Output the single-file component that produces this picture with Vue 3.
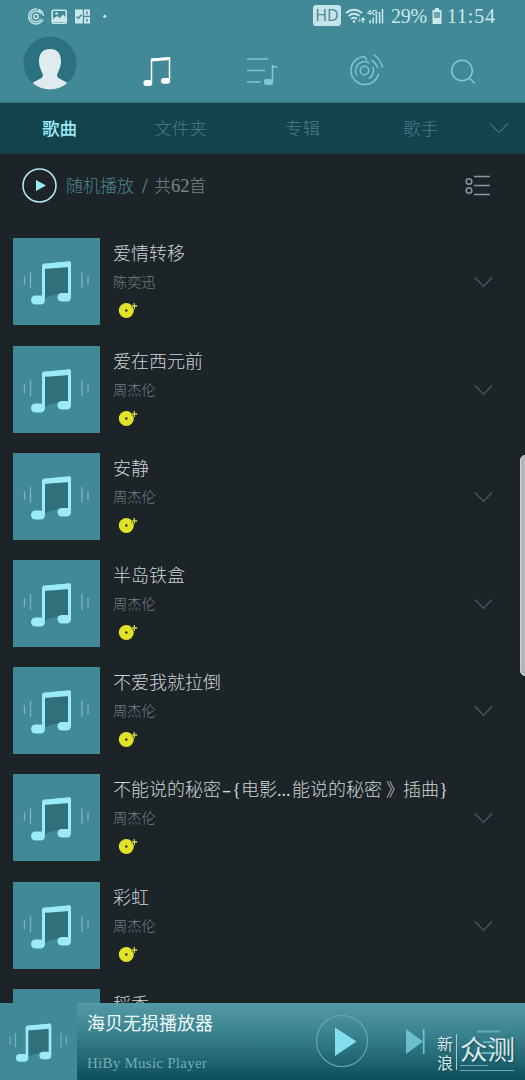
<script setup>
const songs = [
  { parts: [{ t: '爱情转移' }], artist: '陈奕迅' },
  { parts: [{ t: '爱在西元前' }], artist: '周杰伦' },
  { parts: [{ t: '安静' }], artist: '周杰伦' },
  { parts: [{ t: '半岛铁盒' }], artist: '周杰伦' },
  { parts: [{ t: '不爱我就拉倒' }], artist: '周杰伦' },
  {
    parts: [
      { t: '不能说的秘密' },
      { t: '-', c: 'dash' },
      { t: '{', c: 'brace' },
      { t: '电影' },
      { t: '...', c: 'dots' },
      { t: '能说的秘密' },
      { t: '》', c: 'quote' },
      { t: '插曲' },
      { t: '}', c: 'brace' },
    ],
    artist: '周杰伦',
  },
  { parts: [{ t: '彩虹' }], artist: '周杰伦' },
  { parts: [{ t: '稻香' }], artist: '' },
]
</script>

<template>
  <div class="app">
    <svg class="defs" width="0" height="0">
      <defs>
        <symbol id="cover" viewBox="0 0 87 87">
          <path d="M31 29 57 27V57Q45 54 31 61Z" fill="#316f7a" />
          <path d="M30.500 61V27.500L56.500 25V58" fill="none" stroke="#9beaf8" stroke-width="3" stroke-linejoin="round" />
          <path d="M30 25.800 57 23.300V29L30 31Z" fill="#9beaf8" />
          <rect x="18" y="57.500" width="14" height="9" rx="4.500" fill="#9beaf8" />
          <rect x="44.500" y="55" width="13.500" height="8.500" rx="4.200" fill="#9beaf8" />
          <path d="M11.500 38V47M17.500 34V50M69 34V50M75 38V47" stroke="#75b5bf" stroke-width="1.300" />
        </symbol>
      </defs>
    </svg>

    <header class="header">
      <div class="status">
        <svg class="notices" width="90" height="20" viewBox="0 0 90 20" fill="none" stroke="#c9e8ec">
          <circle cx="11" cy="10.500" r="2.200" stroke-width="1.500" />
          <path d="M16 8A5.400 5.400 0 1 0 16 13M12 3A7.500 7.500 0 1 0 18 13.500M13 3.500Q18 5 18.500 10" stroke-width="1.400" />
          <rect x="27.200" y="4.200" width="14" height="13" rx="1" stroke-width="1.600" />
          <path d="M28 16V13L32 10 35 12 38 8.500 41 12V16Z" fill="#c9e8ec" stroke="none" />
          <circle cx="31.500" cy="7.500" r="1.300" fill="#c9e8ec" stroke="none" />
          <path d="M50 3.500h7.800v14h-7.800zM59 3.500h6v6.200h-6zM59 11h6v6.500h-6z" fill="#c9e8ec" stroke="none" />
          <path d="M51.500 10.500 53.500 12.500 56.500 8.500M62 5V8.500M62 12.500V16" stroke="#428997" stroke-width="1.300" />
          <circle cx="79.800" cy="10.200" r="1.500" fill="#c9e8ec" stroke="none" />
        </svg>
        <span class="hd">HD</span>
        <svg class="signal" width="42" height="20" viewBox="0 0 42 20" fill="none" stroke="#c9e8ec">
          <path d="M2 7Q10 .5 18 7M4.500 10Q10 5.500 15.500 10M7 13Q10 10.500 13 13" stroke-width="1.700" />
          <circle cx="10" cy="15.500" r="1.300" fill="#c9e8ec" stroke="none" />
          <path d="M15.500 16V12M14 14l1.500 2 1.500-2" stroke="#8fc0c8" stroke-width="1" />
          <path d="M19 17V12M17.200 14.200l1.800-2.200 1.800 2.200" stroke-width="1.300" />
          <path d="M26 17.500V14M29.200 17.500V11.500M32.400 17.500V9M35.600 17.500V6M38.500 17.500V3" stroke-width="1.500" />
          <text x="23" y="8.500" class="net">4G</text>
        </svg>
        <span class="pct">29%</span>
        <svg class="battery" width="12" height="18" viewBox="0 0 12 18">
          <path d="M4 1h4v2h2.500v14h-9V3H4Z" fill="#c9e8ec" />
          <path d="M3 5h6v6H3Z" fill="#6fa7b1" />
        </svg>
        <span class="clock">11:54</span>
      </div>

      <nav class="nav">
        <svg class="avatar" width="54" height="54" viewBox="0 0 54 54">
          <defs>
            <clipPath id="face"><circle cx="27" cy="27" r="26.500" /></clipPath>
          </defs>
          <circle cx="27" cy="27" r="26.500" fill="#2c717f" />
          <g clip-path="url(#face)" fill="#dfebee">
            <path d="M27 13C34 13 38.200 17.500 38 25.500 37.800 32.500 34.500 36 34 39.500 34.500 43 41 44 46 48V54H8V48C13 44 19.500 43 20 39.500 19.500 36 16.200 32.500 16 25.500 15.800 17.500 20 13 27 13Z" />
          </g>
        </svg>
        <svg class="n-music" width="30" height="32" viewBox="0 0 30 32">
          <path d="M9.500 26V3.500L27.500 2V23" fill="none" stroke="#fff" stroke-width="1.500" />
          <path d="M9 2.500 28 1V4L9 5.500Z" fill="#fff" />
          <rect x="1.500" y="24" width="8.700" height="6" rx="2.800" fill="#fff" />
          <rect x="19" y="22" width="9.200" height="5.800" rx="2.800" fill="#fff" />
        </svg>
        <svg class="n-list" width="34" height="30" viewBox="0 0 34 30" fill="none" stroke="#7fc6d3" stroke-width="1.600" stroke-linecap="round">
          <path d="M2.500 3H22.500M2.500 14.500H19.500M2.500 26H15M27.500 26V10Q29.500 11 32 11" />
          <rect x="19" y="23" width="9" height="6" rx="2.500" fill="#7fc6d3" stroke="none" />
        </svg>
        <svg class="n-disc" width="36" height="36" viewBox="0 0 36 36" fill="none" stroke="#7fc6d3" stroke-width="1.500" stroke-linecap="round">
          <circle cx="16.500" cy="19.500" r="4.200" />
          <path d="M8.700 24A9 9 0 0 1 21 11.800M25 16.500A9 9 0 0 1 21 27.300M18.500 8.500Q17.500 5.200 14.500 5.700A14 14 0 1 0 30.500 23M24 9.500Q28 12 29.500 16.500M26 4Q32.500 8.500 34.500 16" />
        </svg>
        <svg class="n-search" width="28" height="28" viewBox="0 0 28 28" fill="none" stroke="#7fc6d3" stroke-width="1.600" stroke-linecap="round">
          <circle cx="13" cy="13.500" r="10.300" />
          <path d="M20.500 21 25.500 26" />
        </svg>
      </nav>
    </header>

    <div class="tabs">
      <span class="tab on">歌曲</span>
      <span class="tab">文件夹</span>
      <span class="tab">专辑</span>
      <span class="tab">歌手</span>
      <svg class="more" width="20" height="12" viewBox="0 0 20 12"><path d="M1 1.500 10 10.500 19 1.500" fill="none" stroke="#347581" stroke-width="1.200" /></svg>
    </div>

    <div class="shuffle">
      <svg width="35" height="35" viewBox="0 0 35 35">
        <circle cx="17.500" cy="17.500" r="16.500" fill="none" stroke="#b5e4ec" stroke-width="1.600" />
        <path d="M14 12V23L24 17.500Z" fill="#9beaf8" />
      </svg>
      <span class="random">随机播放</span>
      <span class="slash">/</span>
      <span class="total">共<b>62</b>首</span>
      <svg class="options" width="28" height="24" viewBox="0 0 28 24" fill="none" stroke="#839ca3" stroke-width="1.500">
        <circle cx="5" cy="7.500" r="2.800" />
        <circle cx="5" cy="16.500" r="2.800" />
        <path d="M10 2.500H26M10 11.500H26M10 20.500H26" />
      </svg>
    </div>

    <main class="songs">
      <article v-for="(song, i) in songs" :key="i" class="song">
        <svg class="cover"><use href="#cover" /></svg>
        <div class="info">
          <div class="title"><span v-for="(p, j) in song.parts" :key="j" :class="p.c">{{ p.t }}</span></div>
          <div class="artist">{{ song.artist }}</div>
          <svg class="quality" width="24" height="20" viewBox="0 0 24 20">
            <circle cx="8.300" cy="10.500" r="7.500" fill="#e2e226" />
            <circle cx="8.300" cy="10.500" r="1.300" fill="#34360f" />
            <path d="M16.300 3V9M13.300 6H19.300" stroke="#1d2427" stroke-width="2.600" />
            <path d="M16.300 3V9M13.300 6H19.300" stroke="#cdd457" stroke-width="1.300" />
          </svg>
        </div>
        <svg class="chev" width="20" height="12" viewBox="0 0 20 12"><path d="M1 1.500 9.500 10.500 18 1.500" fill="none" stroke="#4b5c64" stroke-width="1.200" /></svg>
      </article>
    </main>

    <footer class="player">
      <svg class="now-cover" viewBox="0 0 77 77"><use href="#cover" width="77" height="77" /></svg>
      <div class="now">
        <div class="now-title">海贝无损播放器</div>
        <div class="now-sub">HiBy Music Player</div>
      </div>
      <svg class="controls" width="215" height="77" viewBox="0 0 215 77">
        <circle cx="32" cy="38" r="25.500" fill="none" stroke="#69aab6" stroke-width="1.100" />
        <path d="M25 24.500V53L46.500 38.500Z" fill="#83dfee" />
        <path d="M96 26V51L113 38.500Z" fill="#6cc0cd" />
        <path d="M113.700 26V51" stroke="#6cc0cd" stroke-width="1.800" />
        <path d="M167 28.500H190M173 39H190M167 50H190" stroke="#62adba" stroke-width="1.800" />
      </svg>
      <div class="mark">
        <div class="mark-small"><span>新</span><span>浪</span></div>
        <div class="mark-main">
          <span>众测</span>
          <i class="short"></i>
          <i></i>
        </div>
      </div>
    </footer>

    <div class="edge"></div>
  </div>
</template>

<style>
body { margin: 0; background: #1d2427; }
</style>

<style scoped>
.app {
  position: relative;
  display: flex;
  flex-direction: column;
  width: 525px;
  height: 1080px;
  overflow: hidden;
  background: #1d2427;
  font-family: "Liberation Serif", "Noto Sans CJK SC", serif;
  font-weight: 300;
  white-space: nowrap;
}
.app svg { display: block; flex: none; }
.app .defs { position: absolute; }
.header {
  box-sizing: border-box;
  flex: none;
  height: 103px;
  background: #428997;
  border-bottom: 1px solid #347783;
}
.status { display: flex; align-items: center; height: 31px; padding-left: 25px; color: #c9e8ec; }
.hd {
  margin-left: 198px;
  width: 28px;
  height: 21px;
  border-radius: 3px;
  background: #c5e3e8;
  color: #528b95;
  font: 400 16px/21px "Noto Sans", sans-serif;
  text-align: center;
}
.signal { margin-left: 3px; }
.net { font: bold 8px "Liberation Sans", sans-serif; fill: #c9e8ec; stroke: none; }
.pct, .clock { font: 400 20px/30px "Liberation Serif", serif; padding-top: 1px; }
.pct { margin-left: 5px; width: 37px; letter-spacing: -0.3px; }
.battery { margin-left: 3px; }
.clock { margin-left: 4px; letter-spacing: 0.8px; }
.nav { display: flex; align-items: flex-start; padding-left: 23px; }
.avatar { margin-top: 5px; }
.n-music { margin: 25px 0 0 65px; }
.n-list { margin: 25px 0 0 73px; }
.n-disc { margin: 20px 0 0 69px; }
.n-search { margin: 26px 0 0 65px; }
.tabs { flex: none; display: flex; align-items: center; height: 50px; background: #14434d; border-bottom: 1px solid #16343b; }
.tab { padding-top: 1px; font-size: 17.6px; line-height: 26px; color: #477c86; }
.tab.on { margin-left: 42px; color: #9beaf8; font-weight: 500; }
.tab:nth-child(2) { margin-left: 77px; }
.tab:nth-child(3) { margin-left: 78px; }
.tab:nth-child(4) { margin-left: 83px; }
.more { margin-left: 51px; }
.shuffle { flex: none; display: flex; align-items: center; height: 63px; padding-left: 22px; font-size: 17px; line-height: 26px; color: #7b8589; }
.random { margin-left: 9px; padding-top: 2px; color: #4a8591; }
.slash { margin: 0 7px 0 8px; font-size: 20px; }
.total { width: 52px; padding-top: 2px; font-size: 16.5px; }
.total b { font-weight: 400; font-size: 18.5px; }
.options { margin-left: 257px; }
.songs { flex: none; box-sizing: border-box; height: 786px; overflow: hidden; display: grid; align-content: start; row-gap: 20.200px; padding: 21.400px 0 0 13px; }
.song { display: flex; height: 87px; }
.cover { width: 87px; height: 87px; background: #428997; }
.info { width: 361px; padding-left: 13px; }
.title { height: 30px; line-height: 32px; font-size: 18px; color: #ccd4d7; }
.title span { display: inline-block; }
.title .dash { width: 11px; text-align: center; transform: scaleX(1.6); }
.title .brace { width: 9px; text-align: center; }
.title .dots { width: 15px; }
.title .quote { width: 21px; text-indent: 4px; }
.artist { height: 28px; line-height: 28px; font-size: 14.200px; color: #767f84; }
.quality { margin: 4px 0 0 5px; }
.chev { margin-top: 38px; }
.player {
  position: relative;
  flex: none;
  height: 77px;
  display: flex;
  background: linear-gradient(180deg, #549aa6 0%, #3d8591 35%, #236a76 70%, #0d4e5c 100%);
}
.now-cover { width: 77px; height: 77px; background: #428997; }
.now { width: 223px; padding-left: 10px; }
.now-title { height: 42px; line-height: 43px; font-size: 18px; font-weight: 400; color: #eef9fa; }
.now-sub { height: 35px; line-height: 36px; font-size: 15px; letter-spacing: 0.25px; color: #78abb5; }
.mark { position: absolute; left: 437px; top: 31px; display: flex; color: #d7e8eb; text-shadow: 1px 1px 2px #1b4b56; font-family: "Noto Sans CJK SC", sans-serif; font-weight: 400; }
.mark-small { display: flex; flex-direction: column; width: 19px; height: 36px; border-right: 1px solid #a9cbd0; font-size: 16px; line-height: 18.500px; }
.mark-main { padding-left: 3px; font-size: 27.500px; line-height: 28px; }
.mark-main span { display: block; height: 30px; }
.mark-main i { display: block; width: 54px; height: 1px; margin-top: 4px; background: #70a5ae; }
.mark-main i.short { width: 28px; margin-top: 1px; }
.edge {
  position: absolute;
  left: 520px;
  top: 455px;
  width: 10px;
  height: 221px;
  box-sizing: border-box;
  border: 1px solid #d0d3d3;
  border-radius: 5px;
  background: #b2b6b6;
}
</style>
